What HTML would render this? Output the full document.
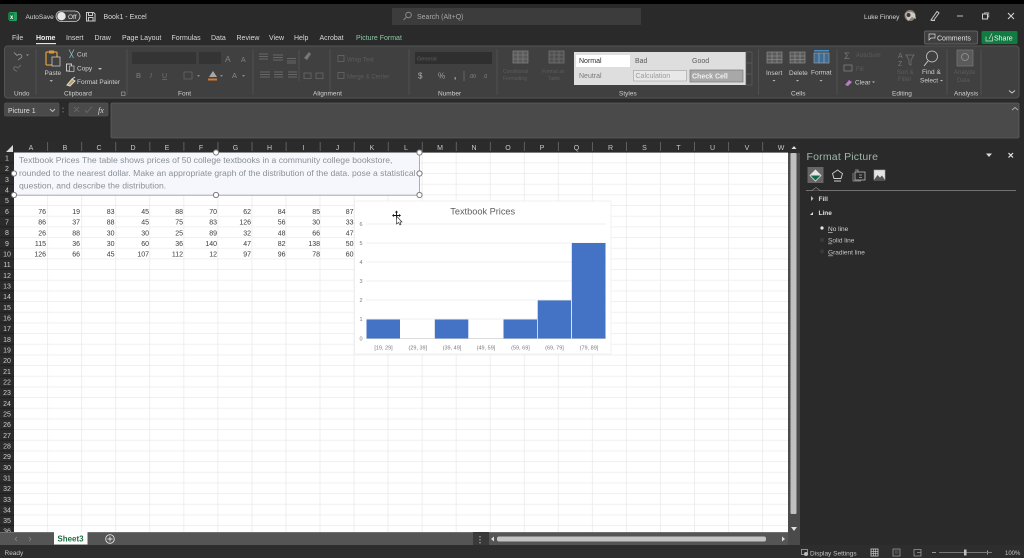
<!DOCTYPE html>
<html><head><meta charset="utf-8"><title>Excel</title>
<style>
html,body{margin:0;padding:0;background:#000;width:1024px;height:558px;overflow:hidden}
svg{display:block;font-family:"Liberation Sans",sans-serif;filter:blur(.3px)}
.t{fill:#d8d8d8;font-size:7px}
.d{fill:#5c5c5c;font-size:6px}
.g{fill:#cfcfcf;font-size:6.5px}
.c{fill:#c8c8c8;font-size:7px;text-anchor:middle}
.r{fill:#cdcdcd;font-size:7px;text-anchor:middle}
.n text,.n{fill:#3a3a3a;font-size:7px;text-anchor:end}
.a{fill:#7a7a7a;font-size:5.5px;text-anchor:middle}
.h{fill:#fff;stroke:#7d7d7d;stroke-width:1}
.i{fill:none;stroke:#6a6a6a;stroke-width:1}
.w{fill:none;stroke:#c8c8c8;stroke-width:1}
</style></head><body>
<svg width="1024" height="558" viewBox="0 0 1024 558" xmlns="http://www.w3.org/2000/svg">
<defs>
<pattern id="grid" x="14" y="152.6" width="34.05" height="10.67" patternUnits="userSpaceOnUse">
<rect width="34.05" height="10.67" fill="#fff"/>
<path d="M33.6 0V10.67M0 10.3H34.05" stroke="#ebebeb" stroke-width=".8"/>
</pattern>
<pattern id="cols" x="14" y="141" width="34.05" height="11" patternUnits="userSpaceOnUse">
<path d="M33.8 1V10" stroke="#7a7a7a" stroke-width=".8"/>
</pattern>
<pattern id="rows" x="0" y="152.6" width="14" height="10.67" patternUnits="userSpaceOnUse">
<path d="M0 10.3H14" stroke="#1a1a1a" stroke-width=".7"/>
</pattern>
</defs>
<rect width="1024" height="558" fill="#2a2a2a"/>
<rect width="1024" height="4" fill="#000"/>
<!-- title bar -->
<rect x="9" y="12" width="8" height="9" rx="1" fill="#1f9d5a"/><rect x="8" y="13" width="6" height="7" fill="#107c41"/>
<text x="10" y="19" fill="#fff" font-size="6" font-weight="bold">x</text>
<text x="25.500" y="19" class="t" style="font-size:6.500px">AutoSave</text>
<rect x="56" y="11" width="24" height="10.500" rx="5.200" fill="#3a3a3a" stroke="#cfcfcf" stroke-width=".8"/><circle cx="61.500" cy="16.200" r="4.200" fill="#e8e8e8"/>
<text x="68" y="19" fill="#e0e0e0" font-size="6.500">Off</text>
<path d="M86.500 12.500H93.500L95 14V21H86.500ZM88.500 12.500V15.500H92.500V12.500M88.500 21V17.500H93V21" class="w" stroke-width=".8"/>
<text x="103.500" y="19" class="t">Book1  -  Excel</text>
<rect x="392" y="8" width="249" height="17" rx="1" fill="#3c3c3c"/>
<circle cx="408.500" cy="15" r="2.800" fill="none" stroke="#999" stroke-width=".8"/><path d="M406.500 17L403.500 20" stroke="#999" stroke-width=".8"/>
<text x="417" y="19" fill="#a8a8a8" font-size="7">Search (Alt+Q)</text>
<text x="864" y="19" class="t" style="font-size:6.500px">Luke Finney</text>
<circle cx="910" cy="15.500" r="5.500" fill="#8a8378"/><path d="M905 14Q910 10 915 14L916 19L912 17L908 21Z" fill="#cfcac0"/><circle cx="908.500" cy="15" r="2" fill="#3c3833"/>
<path d="M931 20L937 11.500L939 13L933.500 20.500ZM931 20.500L935 20.500" class="w" stroke-width=".9"/>
<path d="M957 16H963" stroke="#c0c0c0"/>
<rect x="982.500" y="14" width="5" height="5" fill="none" stroke="#cfcfcf"/><path d="M984.500 14V12.800H988.800V17H987.500" fill="none" stroke="#cfcfcf" stroke-width=".7"/>
<path d="M1008 13L1014 19M1014 13L1008 19" stroke="#d8d8d8"/>
<!-- tabs -->
<g class="t">
<text x="12" y="40">File</text><text x="36" y="40" style="fill:#f0f0f0;font-weight:bold">Home</text><text x="66" y="40">Insert</text><text x="94.500" y="40">Draw</text><text x="122" y="40">Page Layout</text><text x="171.500" y="40">Formulas</text><text x="211" y="40">Data</text><text x="236.500" y="40">Review</text><text x="269" y="40">View</text><text x="294" y="40">Help</text><text x="319.500" y="40">Acrobat</text>
<text x="356" y="40" style="fill:#8fc7a5">Picture Format</text>
</g>
<rect x="36" y="43" width="20" height="1.200" fill="#d8e8de"/>
<rect x="924.500" y="31" width="53" height="13" rx="1.500" fill="#3f3f3f" stroke="#707070" stroke-width=".7"/>
<path d="M929 34H935V38H931L929 40Z" fill="none" stroke="#ddd" stroke-width=".7"/>
<text x="937" y="40.500" fill="#e6e6e6" font-size="7">Comments</text>
<rect x="981.500" y="31" width="36" height="13" rx="1.500" fill="#107c41"/>
<path d="M986 36.500V41H992.500V36.500M989 39L992 33.500" fill="none" stroke="#ddd" stroke-width=".7"/>
<text x="994" y="40.500" fill="#f2f2f2" font-size="7">Share</text>
<!-- ribbon -->
<rect x="4.500" y="46" width="1014.500" height="52" rx="3" fill="#404040" stroke="#555"/>
<path d="M36 49V95M127 49V95M253 49V95M330 49V95M409 49V95M497 49V95M758.500 49V95M837 49V95M947 49V95M981 49V95" stroke="#555" stroke-width=".8"/>
<!-- undo -->
<path d="M14 52.500L17 55.500C20 53 22.500 55 21.500 57.500L18 60" fill="none" stroke="#8a8a8a"/><path d="M26 54.500L29 54.500L27.500 56Z" fill="#999"/>
<path d="M21 65L18 68C15 65.500 13 67 14 69.500L17 71.500" stroke="#6c6c6c" fill="none"/>
<text x="14" y="95.500" class="g">Undo</text>
<!-- clipboard -->
<rect x="46" y="52" width="11" height="13" rx="1" fill="none" stroke="#d69a3c" stroke-width="1.300"/><rect x="49" y="50.500" width="5" height="3" fill="#d69a3c"/><rect x="52" y="57" width="8" height="9" fill="#404040" stroke="#c5c5c5" stroke-width=".8"/>
<text x="44.500" y="75" class="g">Paste</text><path d="M49.500 80H53L51.200 82Z" fill="#aaa"/>
<path d="M69 49.500L73.500 58M74 49.500L69.500 58" stroke="#8fb8cc" stroke-width=".8" fill="none"/>
<text x="77" y="56.500" class="g">Cut</text>
<rect x="66.500" y="64" width="5" height="7" class="w" stroke-width=".7"/><rect x="69.500" y="66" width="4.500" height="5.500" stroke="#c8c8c8" stroke-width=".7" fill="#404040"/>
<text x="77" y="70.500" class="g">Copy</text><path d="M98 68H102L100 70Z" fill="#bbb"/>
<path d="M67 85L72 79L75 81L70 86ZM72 79L75 77" stroke="#d8d8d8" stroke-width="1" fill="#b8a060"/>
<text x="77" y="84" class="g">Format Painter</text>
<text x="64" y="95.500" class="g">Clipboard</text>
<rect x="121.500" y="92" width="3.500" height="3.500" fill="none" stroke="#aaa" stroke-width=".6"/>
<!-- font -->
<rect x="132" y="52" width="64" height="12" fill="#343434"/><rect x="199" y="52" width="22" height="12" fill="#343434"/>
<text x="225" y="62" fill="#808080" font-size="8.500">A</text><text x="241" y="62" fill="#808080" font-size="7">A</text>
<text x="136" y="78" fill="#707070" font-size="7" font-weight="bold">B</text><text x="150" y="78" fill="#707070" font-size="7" font-style="italic">I</text><text x="162" y="78" fill="#707070" font-size="7" text-decoration="underline">U</text>
<rect x="184" y="72" width="8" height="7" fill="none" stroke="#6a6a6a" stroke-width=".7"/><path d="M197 75H200L198.500 77Z" fill="#888"/>
<path d="M209 77L213 71L217 77Z" fill="#a8a8a8"/><rect x="208" y="78.500" width="9" height="2" fill="#d8782c"/><path d="M220 75H223L221.500 77Z" fill="#888"/>
<text x="232" y="78" fill="#888" font-size="7.500">A</text><path d="M242 75H245L243.500 77Z" fill="#888"/>
<text x="178" y="95.500" class="g">Font</text>
<!-- alignment -->
<g stroke="#747474" stroke-width=".8">
<path d="M259 54H268M259 56.500H268M259 59H268M273 55H283M273 57.500H283M273 60H283M287 58.500H296M287 61H296M287 63H296"/>
<path d="M260 72H270M260 74.500H270M260 77H270M274 72H283M274 74.500H283M274 77H283M288 72H297M288 74.500H297M288 77H297"/>
<path d="M299 50V81" stroke="#555"/>
</g>
<path d="M304 58L309 52L311 54L307 60Z" fill="#777"/>
<rect x="304" y="73" width="7" height="5.500" fill="none" stroke="#6e6e6e" stroke-width=".7"/><rect x="316" y="73" width="7" height="5.500" fill="none" stroke="#6e6e6e" stroke-width=".7"/>
<text x="347" y="61.500" class="d">Wrap Text</text><text x="347" y="78.500" class="d">Merge &amp; Center</text>
<rect x="338" y="55.500" width="6" height="6" fill="none" stroke="#666" stroke-width=".8"/><rect x="338" y="72.500" width="6" height="6" fill="none" stroke="#666" stroke-width=".8"/>
<text x="313" y="95.500" class="g">Alignment</text>
<!-- number -->
<rect x="415" y="52" width="77" height="12" fill="#2f2f2f"/><text x="417" y="60.500" font-size="5.500" fill="#5f5f5f">General</text>
<text x="418" y="78.500" fill="#b0b0b0" font-size="8">$</text><text x="438" y="78.500" fill="#a0a0a0" font-size="8">%</text><text x="454" y="78.500" fill="#c0c0c0" font-size="8" font-weight="bold">,</text>
<path d="M464 71V81" stroke="#666"/>
<text x="469" y="78" fill="#8a8a8a" font-size="5">.00</text><text x="483" y="78" fill="#8a8a8a" font-size="5">.0</text>
<text x="438" y="95.500" class="g">Number</text>
<!-- conditional -->
<rect x="513" y="51" width="15" height="12" fill="#5a5a5a" stroke="#858585" stroke-width=".7"/><path d="M518 51V63M523 51V63M513 55H528M513 59H528" stroke="#858585" stroke-width=".6"/>
<rect x="549" y="51" width="15" height="12" fill="#505050" stroke="#7a7a7a" stroke-width=".7"/><path d="M554 51V63M559 51V63M549 55H564M549 59H564" stroke="#777" stroke-width=".6"/>
<text x="503" y="73" class="d" style="font-size:5px">Conditional</text><text x="503" y="80" class="d" style="font-size:5px">Formatting</text>
<text x="542" y="73" class="d" style="font-size:5px">Format as</text><text x="548" y="80" class="d" style="font-size:5px">Table</text>
<!-- styles -->
<rect x="574" y="52" width="172" height="33" fill="#dedede"/>
<rect x="576" y="55" width="54" height="12" fill="#fff"/>
<text x="579" y="63" fill="#2d2d2d" font-size="7">Normal</text>
<text x="635" y="63" fill="#5e5e5e" font-size="7">Bad</text>
<text x="692" y="63" fill="#5e5e5e" font-size="7">Good</text>
<text x="579" y="78" fill="#7a7a7a" font-size="7">Neutral</text>
<rect x="633.500" y="70.500" width="53" height="10.500" fill="#e8e8e8" stroke="#a8a8a8" stroke-width=".7"/>
<text x="635.500" y="78" fill="#9a9a9a" font-size="7">Calculation</text>
<rect x="690" y="70" width="53" height="12" fill="#a8a8a8" stroke="#777" stroke-width=".7"/>
<text x="692" y="78.500" fill="#f0f0f0" font-size="7" font-weight="bold">Check Cell</text>
<rect x="746" y="52" width="6" height="11" fill="none" stroke="#5c5c5c" stroke-width=".7"/><rect x="746" y="63" width="6" height="11" fill="none" stroke="#5c5c5c" stroke-width=".7"/><rect x="746" y="74" width="6" height="11" fill="none" stroke="#5c5c5c" stroke-width=".7"/>
<text x="619" y="95.500" class="g">Styles</text>
<!-- cells -->
<rect x="767" y="52" width="15" height="11" fill="#5a5a5a" stroke="#8a8a8a" stroke-width=".7"/><path d="M767 56H782M767 59.500H782M772 52V63M777 52V63" stroke="#999" stroke-width=".6"/>
<rect x="790" y="52" width="15" height="11" fill="#5a5a5a" stroke="#8a8a8a" stroke-width=".7"/><path d="M790 56H805M790 59.500H805M795 52V63M800 52V63" stroke="#999" stroke-width=".6"/>
<rect x="814" y="53" width="15" height="10" fill="#3d6c96" stroke="#9a9a9a" stroke-width=".7"/><rect x="814" y="50" width="15" height="1.500" fill="#3f8fd0"/><path d="M819 53V63M824 53V63" stroke="#b8b8b8" stroke-width=".6"/>
<text x="766" y="75" class="g">Insert</text><text x="789" y="75" class="g">Delete</text><text x="811" y="74.500" class="g">Format</text>
<path d="M772.500 80H775.500L774 81.500ZM796 80H799L797.500 81.500ZM819.500 80H822.500L821 81.500Z" fill="#bbb"/>
<text x="791" y="95.500" class="g">Cells</text>
<!-- editing -->
<text x="844" y="59" fill="#777" font-size="9.500">Σ</text><text x="856" y="57" class="d">AutoSum</text>
<rect x="844" y="65" width="8" height="6" fill="none" stroke="#888" stroke-width=".7"/><text x="856" y="71" class="d">Fill</text>
<path d="M845 85L849 80L852 82L848 86Z" fill="#b87cc8"/><text x="855" y="84.500" class="g">Clear</text><path d="M872 81.500H875L873.500 83Z" fill="#bbb"/>
<text x="898" y="58" fill="#777" font-size="7">A</text><text x="898" y="66" fill="#777" font-size="7">Z</text><path d="M906 55H914L911 60V65L909 64V60Z" fill="none" stroke="#6f6f6f" stroke-width=".8"/>
<text x="897" y="74" class="d">Sort &amp;</text><text x="898" y="81" class="d">Filter</text>
<circle cx="932" cy="56.500" r="5.500" fill="none" stroke="#c8c8c8" stroke-width=".8"/><path d="M928 61L924 66" stroke="#c8c8c8"/>
<text x="922" y="74" class="g">Find &amp;</text><text x="920" y="82.500" class="g">Select</text><path d="M940 80H943L941.500 81.500Z" fill="#bbb"/>
<text x="892" y="95.500" class="g">Editing</text>
<!-- analysis -->
<rect x="957" y="50" width="16" height="16" fill="#5a5a5a" stroke="#7a7a7a" stroke-width=".7"/><circle cx="965" cy="57" r="3.500" fill="none" stroke="#8a8a8a"/>
<text x="954" y="74" class="d">Analyze</text><text x="957" y="82" class="d">Data</text>
<text x="954" y="95.500" class="g">Analysis</text>
<path d="M1009 90.500L1012 93L1015 90.500" stroke="#ccc" fill="none"/>
<!-- formula bar -->
<rect x="4.500" y="103" width="54.500" height="13" rx="1.500" fill="#4a4a4a" stroke="#555" stroke-width=".7"/>
<text x="8" y="112.800" fill="#dcdcdc" font-size="7">Picture 1</text>
<path d="M50 109L52.500 111.500L55 109" stroke="#bbb" fill="none"/>
<path d="M63 107.500V109M63 111V112.500" stroke="#777"/>
<rect x="69" y="103" width="39" height="13" rx="1.500" fill="#4a4a4a" stroke="#555" stroke-width=".7"/>
<path d="M74 107L79 112M79 107L74 112" stroke="#6c6c6c" stroke-width=".8"/><path d="M85 110L87 112.500L92 106.500" stroke="#6c6c6c" stroke-width=".8" fill="none"/>
<text x="98" y="113" fill="#d8d8d8" font-size="8" font-family="Liberation Serif" font-style="italic">fx</text>
<rect x="111" y="103" width="908" height="35" rx="1.500" fill="#4a4a4a" stroke="#5e5e5e" stroke-width=".8"/>
<path d="M1012 110L1015 107.500L1018 110" stroke="#aaa" fill="none"/>
<!-- headers -->
<rect x="0" y="141" width="800" height="11.600" fill="#2b2b2b"/>
<rect x="14" y="141" width="771" height="11" fill="url(#cols)"/>
<path d="M6 152L13 152L13 145Z" fill="#d8d8d8"/>
<g class="c">
<text x="31" y="150">A</text><text x="65" y="150">B</text><text x="99" y="150">C</text><text x="133" y="150">D</text><text x="167" y="150">E</text><text x="201" y="150">F</text><text x="235.500" y="150">G</text><text x="269.500" y="150">H</text><text x="303.500" y="150">I</text><text x="337.500" y="150">J</text><text x="372" y="150">K</text><text x="406" y="150">L</text><text x="440" y="150">M</text><text x="474" y="150">N</text><text x="508" y="150">O</text><text x="542" y="150">P</text><text x="576.500" y="150">Q</text><text x="610.500" y="150">R</text><text x="644.500" y="150">S</text><text x="678.500" y="150">T</text><text x="712.500" y="150">U</text><text x="747" y="150">V</text><text x="781" y="150">W</text>
</g>
<path d="M792 146L795 149H789Z" fill="#d8d8d8"/>
<rect x="0" y="152.600" width="14" height="379.400" fill="#2b2b2b"/>
<rect x="0" y="152.600" width="14" height="379.400" fill="url(#rows)"/>
<g class="r">
<text x="7" y="160.500">1</text><text x="7" y="171">2</text><text x="7" y="182">3</text><text x="7" y="192.500">4</text><text x="7" y="203">5</text><text x="7" y="214">6</text><text x="7" y="224.500">7</text><text x="7" y="235">8</text><text x="7" y="246">9</text><text x="7" y="256.500">10</text><text x="7" y="267">11</text><text x="7" y="278">12</text><text x="7" y="288.500">13</text><text x="7" y="299">14</text><text x="7" y="310">15</text><text x="7" y="320.500">16</text><text x="7" y="331">17</text><text x="7" y="342">18</text><text x="7" y="352.500">19</text><text x="7" y="363">20</text><text x="7" y="374">21</text><text x="7" y="384.500">22</text><text x="7" y="395">23</text><text x="7" y="406">24</text><text x="7" y="416.500">25</text><text x="7" y="427">26</text><text x="7" y="438">27</text><text x="7" y="448.500">28</text><text x="7" y="459">29</text><text x="7" y="470">30</text><text x="7" y="480.500">31</text><text x="7" y="491">32</text><text x="7" y="502">33</text><text x="7" y="512.500">34</text><text x="7" y="523">35</text><text x="7" y="533.500">36</text>
</g>
<!-- grid -->
<rect x="14" y="152.600" width="774" height="379.400" fill="url(#grid)"/>
<!-- data -->
<g class="n">
<text x="46" y="214">76</text><text x="80" y="214">19</text><text x="114.500" y="214">83</text><text x="149" y="214">45</text><text x="183" y="214">88</text><text x="217" y="214">70</text><text x="251" y="214">62</text><text x="285.500" y="214">84</text><text x="320" y="214">85</text><text x="353.500" y="214">87</text>
<text x="46" y="224.700">86</text><text x="80" y="224.700">37</text><text x="114.500" y="224.700">88</text><text x="149" y="224.700">45</text><text x="183" y="224.700">75</text><text x="217" y="224.700">83</text><text x="251" y="224.700">126</text><text x="285.500" y="224.700">56</text><text x="320" y="224.700">30</text><text x="353.500" y="224.700">33</text>
<text x="46" y="235.400">26</text><text x="80" y="235.400">88</text><text x="114.500" y="235.400">30</text><text x="149" y="235.400">30</text><text x="183" y="235.400">25</text><text x="217" y="235.400">89</text><text x="251" y="235.400">32</text><text x="285.500" y="235.400">48</text><text x="320" y="235.400">66</text><text x="353.500" y="235.400">47</text>
<text x="46" y="246">115</text><text x="80" y="246">36</text><text x="114.500" y="246">30</text><text x="149" y="246">60</text><text x="183" y="246">36</text><text x="217" y="246">140</text><text x="251" y="246">47</text><text x="285.500" y="246">82</text><text x="320" y="246">138</text><text x="353.500" y="246">50</text>
<text x="46" y="256.700">126</text><text x="80" y="256.700">66</text><text x="114.500" y="256.700">45</text><text x="149" y="256.700">107</text><text x="183" y="256.700">112</text><text x="217" y="256.700">12</text><text x="251" y="256.700">97</text><text x="285.500" y="256.700">96</text><text x="320" y="256.700">78</text><text x="353.500" y="256.700">60</text>
</g>
<!-- textbox picture -->
<rect x="14" y="152.600" width="405.500" height="42.500" fill="#f5f7fc"/>
<path d="M14 195.200H419.500V152.600" fill="none" stroke="#9a9a9a" stroke-width=".8"/>
<g fill="#8b9098" font-size="8.600">
<text x="19" y="163">Textbook Prices The table shows prices of 50 college textbooks in a community college bookstore,</text>
<text x="19" y="176">rounded to the nearest dollar. Make an appropriate graph of the distribution of the data. pose a statistical</text>
<text x="19" y="188.500">question, and describe the distribution.</text>
</g>
<circle cx="216" cy="152.500" r="2.600" class="h"/><circle cx="419.500" cy="152.500" r="2.600" class="h"/><circle cx="419.500" cy="173.500" r="2.600" class="h"/><circle cx="419.500" cy="195" r="2.600" class="h"/><circle cx="216" cy="195" r="2.600" class="h"/><circle cx="14" cy="195" r="2.600" class="h"/><circle cx="14" cy="173.500" r="2.600" class="h"/>
<!-- chart -->
<rect x="354.500" y="201" width="256.500" height="153" fill="#fff" stroke="#ececec" stroke-width=".7"/>
<text x="482.700" y="214.500" text-anchor="middle" fill="#5f5f5f" font-size="9.200">Textbook Prices</text>
<path d="M366 224H606M366 243H606M366 262H606M366 281H606M366 300H606M366 319H606" stroke="#eaeaea" stroke-width=".7"/>
<path d="M366 338.500H606" stroke="#d0d0d0" stroke-width=".7"/>
<g fill="#4472c4">
<rect x="366.500" y="319.500" width="33.500" height="19"/>
<rect x="434.800" y="319.500" width="33.500" height="19"/>
<rect x="503.500" y="319.500" width="33.500" height="19"/>
<rect x="537.700" y="300.400" width="33.300" height="38.100"/>
<rect x="571.800" y="243" width="33.700" height="95.500"/>
</g>
<g class="a">
<text x="361" y="226">6</text><text x="361" y="245">5</text><text x="361" y="264">4</text><text x="361" y="283">3</text><text x="361" y="302">2</text><text x="361" y="321">1</text><text x="361" y="340.500">0</text>
<text x="383.500" y="349.500">[19, 29]</text><text x="417.800" y="349.500">(29, 39]</text><text x="452" y="349.500">(39, 49]</text><text x="486" y="349.500">(49, 59]</text><text x="520.500" y="349.500">(59, 69]</text><text x="554.500" y="349.500">(69, 79]</text><text x="589" y="349.500">(79, 89]</text>
</g>
<!-- cursor -->
<path d="M396.500 212V219M393 215.500H400" stroke="#111" stroke-width=".9"/>
<path d="M396.500 210.500L395 212.500H398ZM392 215.500L394 214V217ZM401 215.500L399 214V217Z" fill="#111"/>
<path d="M396.500 216V224L398.500 222.500L400 225L401 224.500L400 222H402Z" fill="#fff" stroke="#222" stroke-width=".6"/>
<!-- vertical scroll -->
<rect x="788" y="141" width="12" height="404" fill="#4a4a4a"/>
<rect x="788" y="141" width="12" height="12" fill="#2b2b2b"/>
<path d="M794 146L796.500 149H791.500Z" fill="#e0e0e0"/>
<rect x="790.500" y="153" width="6" height="361" rx="1" fill="#c0c0c0"/>
<path d="M791 527H797L794 531Z" fill="#e0e0e0"/>
<!-- sheet tabs -->
<rect x="0" y="532" width="788" height="13" fill="#555"/>
<rect x="0" y="532" width="788" height=".8" fill="#777"/>
<path d="M17 537L15 539L17 541M29 537L31 539L29 541" stroke="#888" fill="none" stroke-width=".7"/>
<rect x="54" y="532" width="33.500" height="12.500" fill="#fff"/>
<text x="70.500" y="541.500" text-anchor="middle" fill="#1d6f42" font-size="8" font-weight="bold">Sheet3</text>
<circle cx="110" cy="539" r="4.300" fill="none" stroke="#e4e4e4" stroke-width=".9"/><path d="M107.500 539H112.500M110 536.500V541.500" stroke="#e4e4e4" stroke-width=".9"/>
<rect x="473" y="532" width="16" height="13" fill="#3a3a3a"/>
<path d="M480 536V537.500M480 539V540.500M480 542V543.500" stroke="#bbb"/>
<path d="M491 539L494 536.500V541.500Z" fill="#ddd"/>
<rect x="497" y="536.500" width="269" height="5" rx="2" fill="#c4c4c4"/>
<path d="M785 539L782 536.500V541.500Z" fill="#ddd"/>
<!-- status -->
<rect x="0" y="545" width="1024" height="13" fill="#2d2d2d"/>
<text x="4.500" y="555" fill="#c4c4c4" font-size="6.500">Ready</text>
<rect x="801.500" y="549.500" width="6" height="5" fill="none" stroke="#bbb" stroke-width=".7"/><circle cx="806" cy="554" r="2" fill="#bbb"/>
<text x="810" y="555.500" fill="#c4c4c4" font-size="6.500">Display Settings</text>
<rect x="871" y="549" width="7" height="7" fill="none" stroke="#d0d0d0" stroke-width=".8"/><path d="M873.300 549V556M875.700 549V556M871 551.300H878M871 553.700H878" stroke="#d0d0d0" stroke-width=".6"/>
<rect x="893" y="549" width="7" height="7" fill="none" stroke="#9a9a9a" stroke-width=".8"/><path d="M894.500 551H898.500M894.500 553H898.500" stroke="#9a9a9a" stroke-width=".6"/>
<path d="M914 549.500H921V556H914ZM917 552.500H921" fill="none" stroke="#9a9a9a" stroke-width=".8"/>
<path d="M932 552.500H936M985 552.500H990M987.500 550.500V554.500" stroke="#bbb" stroke-width=".8"/>
<path d="M939 552.500H992" stroke="#777"/><rect x="964" y="549.500" width="2.500" height="6" fill="#c0c0c0"/>
<text x="1005" y="555" fill="#c4c4c4" font-size="6">100%</text>
<!-- format pane -->
<rect x="800" y="141" width="224" height="404" fill="#2a2a2a"/>
<text x="806.500" y="160" fill="#9fb8aa" font-size="10.500" letter-spacing=".2">Format Picture</text>
<path d="M986 153.500H992L989 157Z" fill="#ddd"/>
<path d="M1008.500 153L1013 157.500M1013 153L1008.500 157.500" stroke="#e8e8e8" stroke-width="1.200"/>
<rect x="807.500" y="167" width="16" height="16" fill="#666"/>
<path d="M815.500 170L821 175.500L815.500 181L810 175.500Z" fill="#12694a" stroke="#ddd" stroke-width=".8"/>
<path d="M815.500 170L821 175.500L810 175.500Z" fill="#dfe8e4"/>
<path d="M837.500 170L842.500 173.500L841 178.500H834L832.500 173.500Z" fill="none" stroke="#d0d0d0" stroke-width=".9"/><path d="M834 181H841" stroke="#d0d0d0"/>
<rect x="855" y="172" width="10" height="8" fill="none" stroke="#bbb" stroke-width=".8"/><path d="M855 170H858V172M859 175H862M859 177.500H862" stroke="#aaa" stroke-width=".8" fill="none"/><path d="M853 173V181H861" stroke="#999" stroke-width=".7" fill="none"/>
<rect x="874" y="170" width="11" height="10" fill="#e4e4e4" stroke="#aaa" stroke-width=".6"/><path d="M874 180L877.500 175L880 177.500L882 175.500L885 180Z" fill="#555"/>
<path d="M806 190.500H1016" stroke="#8a8a8a" stroke-width=".8"/><path d="M812 190.500L816 187.500L820 190.500" fill="#2a2a2a" stroke="#8a8a8a" stroke-width=".7"/>
<path d="M811 196L813.500 198.500L811 201" fill="#bbb"/><text x="818.500" y="201" fill="#d8d8d8" font-size="6.500" font-weight="bold">Fill</text>
<path d="M813 212V215H810Z" fill="#ddd"/><text x="818.500" y="215" fill="#e0e0e0" font-size="6.500" font-weight="bold">Line</text>
<circle cx="822" cy="228" r="1.600" fill="#e8e8e8"/><text x="828" y="231" fill="#d4d4d4" font-size="6.500"><tspan text-decoration="underline">N</tspan>o line</text>
<circle cx="822" cy="240" r="2.200" fill="#383838"/><text x="828" y="242.500" fill="#c4c4c4" font-size="6.500"><tspan text-decoration="underline">S</tspan>olid line</text>
<circle cx="822" cy="251.500" r="2.200" fill="#383838"/><text x="828" y="254.500" fill="#c4c4c4" font-size="6.500"><tspan text-decoration="underline">G</tspan>radient line</text>
</svg>
</body></html>
